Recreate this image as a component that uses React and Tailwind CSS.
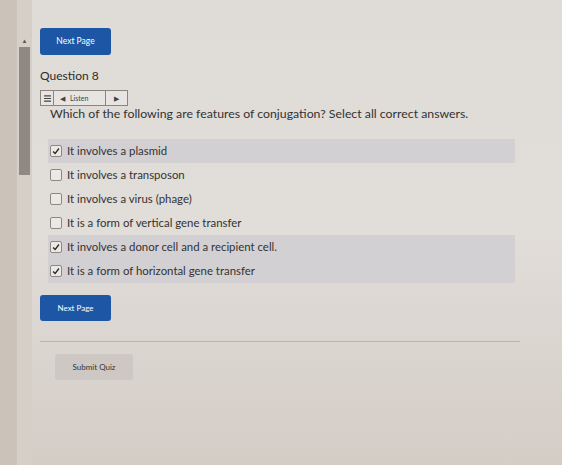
import { Menu } from "lucide-react";

const OPTIONS = [
  { text: "It involves a plasmid", checked: true },
  { text: "It involves a transposon", checked: false },
  { text: "It involves a virus (phage)", checked: false },
  { text: "It is a form of vertical gene transfer", checked: false },
  { text: "It involves a donor cell and a recipient cell.", checked: true },
  { text: "It is a form of horizontal gene transfer", checked: true },
];

function Checkbox({ checked }) {
  return (
    <span className="w-[12px] h-[12px] shrink-0 border border-[#8d8883] rounded-[2px] bg-[#ebe8e5] flex items-center justify-center">
      {checked && (
        <svg viewBox="0 0 12 12" className="w-[10px] h-[10px]">
          <path d="M2.5 6.5 L5 9 L9.5 3" fill="none" stroke="#2b2b2b" strokeWidth="1.6" />
        </svg>
      )}
    </span>
  );
}

export default function App() {
  return (
    <div
      className="w-[562px] h-[465px] flex overflow-hidden bg-gradient-to-b from-[#dfdbd7] via-[#e1ddd9] to-[#d4cdc6] text-[#2d2d2d]"
      style={{ fontFamily: "Lato, 'Open Sans', sans-serif" }}
    >
      {/* left gutter + scrollbar */}
      <div className="w-[32px] shrink-0 flex">
        <div className="w-[17px] bg-[#cbc3ba]" />
        <div className="w-[15px] bg-[#d6cfc8] flex flex-col items-center pt-[38px]">
          <span className="text-[6px] leading-[6px] text-[#555]">▲</span>
          <div className="mt-[3px] w-[11px] h-[128px] bg-[#8f8984]" />
        </div>
      </div>

      {/* content */}
      <div className="flex-1 pl-[8px] pt-[28px] flex flex-col items-start">
        <button className="w-[71px] h-[27px] rounded-[3px] bg-[#1c56a4] text-white text-[8.5px]">
          Next Page
        </button>

        <div className="mt-[14px] text-[12px] leading-[14px]">Question 8</div>

        <div className="mt-[7px] flex h-[16px] w-[88px] border border-[#8a8580] bg-[#e7e4e1] text-[7px] text-[#444]">
          <div className="w-[13px] flex items-center justify-center border-r border-[#8a8580]">
            <Menu className="w-[9px] h-[9px]" strokeWidth={3} />
          </div>
          <div className="w-[52px] flex items-center gap-[5px] pl-[6px] border-r border-[#8a8580]">
            <span className="text-[7px]">◀</span>
            <span>Listen</span>
          </div>
          <div className="flex-1 flex items-center justify-center">
            <span className="text-[7px]">▶</span>
          </div>
        </div>

        <p className="mt-[0px] ml-[10px] text-[12.3px] leading-[15px] text-[#333]">
          Which of the following are features of conjugation? Select all correct answers.
        </p>

        <div className="mt-[18px] ml-[8px] w-[467px] flex flex-col">
          {OPTIONS.map((o, i) => (
            <div
              key={i}
              className={`h-[24px] flex items-center gap-[5px] pl-[2px] ${
                o.checked ? "bg-[#d2d0d3]" : ""
              }`}
            >
              <Checkbox checked={o.checked} />
              <span className="text-[11.4px] text-[#333]">{o.text}</span>
            </div>
          ))}
        </div>

        <button className="mt-[12px] w-[71px] h-[26px] rounded-[3px] bg-[#1c56a4] text-white text-[8px]">
          Next Page
        </button>

        <div className="mt-[20px] w-[480px] h-px bg-[#bbb4ae]" />

        <button className="mt-[12px] ml-[15px] w-[78px] h-[26px] rounded-[3px] bg-[#cdc8c4] text-[#333] text-[8px]">
          Submit Quiz
        </button>
      </div>
    </div>
  );
}
